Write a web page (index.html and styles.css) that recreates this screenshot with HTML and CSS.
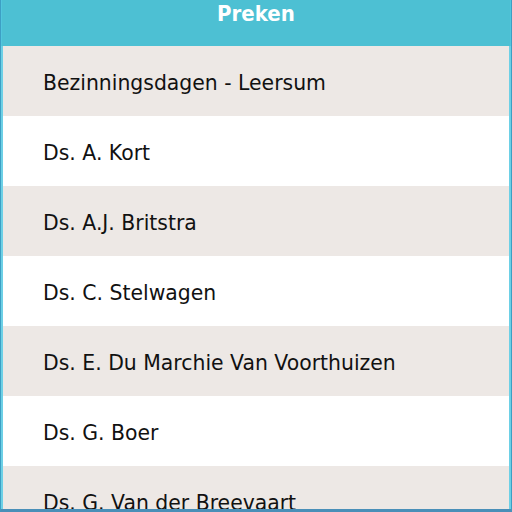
FILE: index.html
```html
<!DOCTYPE html>
<html>
<head>
<meta charset="utf-8">
<link rel="stylesheet" href="styles.css">
</head>
<body>
<div class="frame">
  <header class="bar">Preken</header>
  <ul class="list">
    <li class="row alt">Bezinningsdagen - Leersum</li>
    <li class="row">Ds. A. Kort</li>
    <li class="row alt">Ds. A.J. Britstra</li>
    <li class="row">Ds. C. Stelwagen</li>
    <li class="row alt">Ds. E. Du Marchie Van Voorthuizen</li>
    <li class="row">Ds. G. Boer</li>
    <li class="row alt">Ds. G. Van der Breevaart</li>
  </ul>
</div>
</body>
</html>
```
FILE: styles.css
```css
html, body {
  margin: 0;
  padding: 0;
  width: 512px;
  height: 512px;
  overflow: hidden;
  background: #ffffff;
}
.frame {
  box-sizing: border-box;
  width: 512px;
  height: 512px;
  border-left: 1px solid #3d9fc4;
  border-right: 1px solid #3d9fc4;
  border-bottom: 3px solid #4a8fb8;
  overflow: hidden;
  display: flex;
  flex-direction: column;
}
.bar {
  flex: 0 0 46px;
  box-sizing: border-box;
  background: #4dc0d3;
  color: #ffffff;
  font-family: "DejaVu Sans Condensed", "DejaVu Sans", sans-serif;
  font-weight: bold;
  font-size: 22px;
  text-align: center;
  line-height: 28px;
  padding-bottom: 18px;
  border-left: 1px solid #52c6de;
  border-right: 1px solid #52c6de;
}
.list {
  list-style: none;
  margin: 0;
  padding: 0;
  flex: 1;
  overflow: hidden;
  border-left: 2px solid #6dd0e6;
  border-right: 2px solid #6dd0e6;
}
.row {
  height: 70px;
  display: flex;
  align-items: center;
  padding-left: 40px;
  padding-top: 4px;
  box-sizing: border-box;
  font-family: "DejaVu Sans", sans-serif;
  font-size: 20.4px;
  color: #111111;
  background: #ffffff;
}
.row.alt {
  background: #ede8e5;
}
```
